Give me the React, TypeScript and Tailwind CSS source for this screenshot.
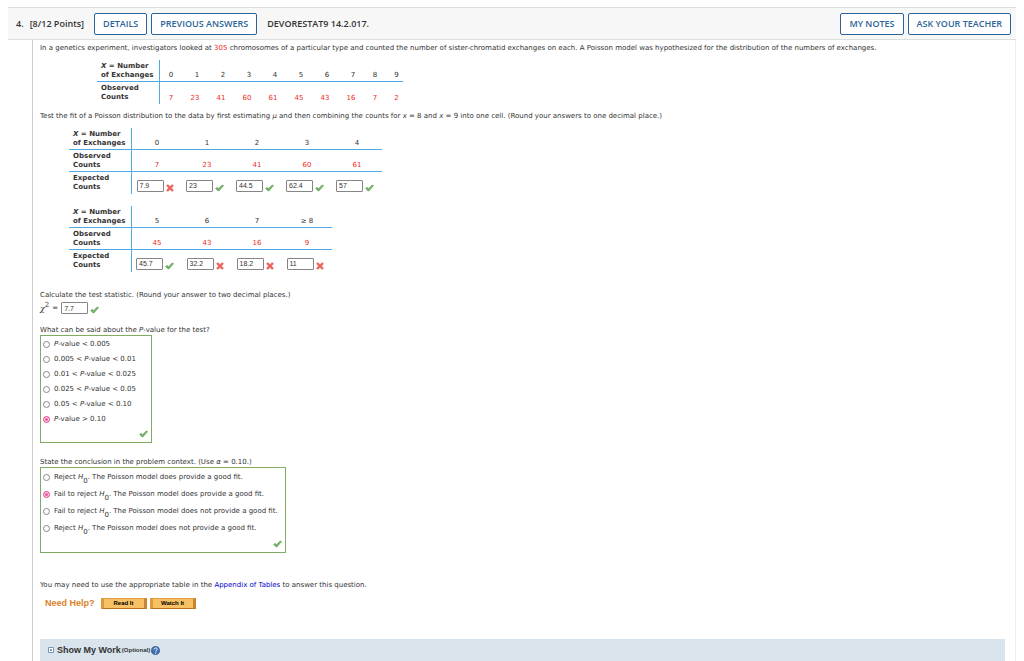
import type { ReactNode } from 'react';
import { clsx } from 'clsx';

type Mark = 'right' | 'wrong';

type Answer = {
    value: string;
    mark: Mark;
};

const observed = [7, 23, 41, 60, 61, 45, 43, 16, 7, 2];

const firstHalf = {
    exchanges: ['0', '1', '2', '3', '4'],
    counts: [7, 23, 41, 60, 61],
    expected: [
        { value: '7.9', mark: 'wrong' },
        { value: '23', mark: 'right' },
        { value: '44.5', mark: 'right' },
        { value: '62.4', mark: 'right' },
        { value: '57', mark: 'right' },
    ] as Answer[],
};

const secondHalf = {
    exchanges: ['5', '6', '7', '≥ 8'],
    counts: [45, 43, 16, 9],
    expected: [
        { value: '45.7', mark: 'right' },
        { value: '32.2', mark: 'wrong' },
        { value: '18.2', mark: 'wrong' },
        { value: '11', mark: 'wrong' },
    ] as Answer[],
};

const P = <i>P</i>;
const H0 = (
    <>
        <i>H</i>
        <sub className="-bottom-1 text-[7px]">0</sub>
    </>
);

const pValueOptions: ReactNode[] = [
    <>{P}-value &lt; 0.005</>,
    <>0.005 &lt; {P}-value &lt; 0.01</>,
    <>0.01 &lt; {P}-value &lt; 0.025</>,
    <>0.025 &lt; {P}-value &lt; 0.05</>,
    <>0.05 &lt; {P}-value &lt; 0.10</>,
    <>{P}-value &gt; 0.10</>,
];

const conclusionOptions: ReactNode[] = [
    <>Reject {H0}. The Poisson model does provide a good fit.</>,
    <>Fail to reject {H0}. The Poisson model does provide a good fit.</>,
    <>Fail to reject {H0}. The Poisson model does not provide a good fit.</>,
    <>Reject {H0}. The Poisson model does not provide a good fit.</>,
];

function CheckMark({ className }: { className?: string }) {
    return (
        <svg viewBox="0 0 18 16" role="img" aria-label="correct" className={clsx('h-2 w-[9px] shrink-0', className)}>
            <path d="M1 9 4.500 6.500 7 9 14 2l3.500 1L8 14H6z" fill="#6cab5c" stroke="#5a9a4e" strokeWidth="0.8" />
            <path d="M3.500 9 7 12 15 3.500" fill="none" stroke="#8cc67c" strokeWidth="1.2" />
        </svg>
    );
}

function CrossMark({ className }: { className?: string }) {
    return (
        <svg viewBox="0 0 16 16" role="img" aria-label="incorrect" className={clsx('size-2 shrink-0', className)}>
            <path
                d="M1 3.5 3.5 1 8 5l4.5-4L15 3.5 11 8l4 4.5-2.5 2.5L8 11l-4.5 4L1 12.5 5 8z"
                fill="#ee6560"
                stroke="#d5433f"
                strokeWidth="0.8"
            />
        </svg>
    );
}

function AnswerBox({ value, mark, label }: Answer & { label: string }) {
    return (
        <span className="inline-flex items-center">
            <input
                type="text"
                defaultValue={value}
                aria-label={label}
                className="h-3 w-[27px] rounded-[1px] border border-[#858585] bg-white pl-0.5 font-['Liberation_Sans',sans-serif] text-[7px] leading-none text-[#333]"
            />
            {mark === 'right' ? <CheckMark className="mt-1 ml-0.5" /> : <CrossMark className="mt-1 ml-0.5" />}
        </span>
    );
}

function RowHeading({ children, last }: { children: ReactNode; last?: boolean }) {
    return (
        <th
            scope="row"
            className={clsx(
                'w-[63px] border-r border-r-[#4fa9e2] pt-0.5 pl-1 text-left align-top font-bold whitespace-nowrap',
                !last && 'border-b border-b-[#4fa9e2]',
            )}
        >
            {children}
        </th>
    );
}

function ExchangesHeading() {
    return (
        <RowHeading>
            <i>X</i> = Number
            <br />
            of Exchanges
        </RowHeading>
    );
}

function ExpectedTable({ exchanges, counts, expected }: typeof firstHalf) {
    return (
        <table className="ml-[29px] border-separate border-spacing-0 leading-[9px]">
            <tbody>
                <tr className="h-[22px]">
                    <ExchangesHeading />
                    {exchanges.map((n) => (
                        <td key={n} className="w-[50px] border-b border-b-[#4fa9e2] pb-px text-center align-bottom">
                            {n}
                        </td>
                    ))}
                </tr>
                <tr className="h-[22px]">
                    <RowHeading>
                        Observed
                        <br />
                        Counts
                    </RowHeading>
                    {counts.map((n) => (
                        <td key={n} className="border-b border-b-[#4fa9e2] pb-px text-center align-bottom text-[#ee2b24]">
                            {n}
                        </td>
                    ))}
                </tr>
                <tr className="h-[22px]">
                    <RowHeading last>
                        Expected
                        <br />
                        Counts
                    </RowHeading>
                    {expected.map((answer, i) => (
                        <td key={i} className="pt-[5px] pr-1">
                            <div className="flex justify-center">
                                <AnswerBox {...answer} label={`Expected count for X ${exchanges[i]}`} />
                            </div>
                        </td>
                    ))}
                </tr>
            </tbody>
        </table>
    );
}

type ChoiceListProps = {
    name: string;
    options: ReactNode[];
    selected: number;
    className: string;
    rowClass: string;
};

function ChoiceList({ name, options, selected, className, rowClass }: ChoiceListProps) {
    return (
        <div className={clsx('w-fit border border-[#80ab60] pt-px pr-[3px] pb-1 pl-0.5', className)}>
            {options.map((option, i) => (
                <label key={i} className={clsx('flex items-center gap-1 whitespace-nowrap', rowClass)}>
                    <input
                        type="radio"
                        name={name}
                        defaultChecked={i === selected}
                        className="size-[7px] shrink-0 appearance-none rounded-full border border-[#888] bg-white checked:border-[#e8559a] checked:bg-[#e8559a] checked:shadow-[inset_0_0_0_1px_#fbe3ef]"
                    />
                    <span>{option}</span>
                </label>
            ))}
            <div className="flex h-[11px] items-end justify-end">
                <CheckMark />
            </div>
        </div>
    );
}

function HeaderButton({ children }: { children: ReactNode }) {
    return (
        <button
            type="button"
            className="h-[22px] rounded-[2px] border border-[#2d6497] bg-white px-2 font-semibold text-[#2d6497]"
        >
            {children}
        </button>
    );
}

function HelpButton({ children }: { children: ReactNode }) {
    return (
        <button
            type="button"
            className="h-[11px] w-[46px] border border-x-[3px] border-[#e09a3e] border-r-[#c98432] border-b-[#b9711f] bg-[#f8c164] text-center text-[6px] leading-[8px] font-bold text-black"
        >
            {children}
        </button>
    );
}

export default function App() {
    return (
        <div className="min-h-screen bg-white px-2 pt-[7px] font-['DejaVu_Sans',Verdana,sans-serif] text-[7px] leading-[9px] text-[#333]">
            <header className="flex h-[33px] items-center justify-between border-y border-[#ddd] bg-[#f7f7f7] pr-[5px] pl-2 font-['Open_Sans',sans-serif] text-[9px]">
                <div className="flex items-center gap-1">
                    <h1 className="mr-[6px] flex gap-[6px] font-semibold">
                        <span>4.</span>
                        <span>[8/12 Points]</span>
                    </h1>
                    <HeaderButton>DETAILS</HeaderButton>
                    <HeaderButton>PREVIOUS ANSWERS</HeaderButton>
                    <span className="ml-[6px] font-semibold">DEVORESTAT9 14.2.017.</span>
                </div>
                <div className="flex items-center gap-1">
                    <HeaderButton>MY NOTES</HeaderButton>
                    <HeaderButton>ASK YOUR TEACHER</HeaderButton>
                </div>
            </header>

            <main className="ml-6 border-r border-l border-r-[#eee] border-l-[#ccc] pt-1 pr-[10px] pl-[7px]">
                <p>
                    In a genetics experiment, investigators looked at <span className="text-[#ee2b24]">305</span> chromosomes of a
                    particular type and counted the number of sister-chromatid exchanges on each. A Poisson model was
                    hypothesized for the distribution of the numbers of exchanges.
                </p>

                <table className="mt-[7px] ml-[57px] border-separate border-spacing-0 leading-[9px]">
                    <tbody>
                        <tr className="h-[22px]">
                            <ExchangesHeading />
                            {observed.map((n, i) => (
                                <td
                                    key={i}
                                    className={clsx(
                                        'border-b border-b-[#4fa9e2] pb-px text-center align-bottom',
                                        i === 9 ? 'w-[17px] pl-1' : n < 10 ? 'w-[22px]' : 'w-[26px] pl-1',
                                    )}
                                >
                                    {i}
                                </td>
                            ))}
                        </tr>
                        <tr className="h-[22px]">
                            <RowHeading last>
                                Observed
                                <br />
                                Counts
                            </RowHeading>
                            {observed.map((n, i) => (
                                <td key={i} className={clsx('pb-px text-center align-bottom text-[#ee2b24]', i === 9 && 'pl-1')}>
                                    {n}
                                </td>
                            ))}
                        </tr>
                    </tbody>
                </table>

                <p className="mt-2">
                    Test the fit of a Poisson distribution to the data by first estimating <i>μ</i> and then combining the counts
                    for <i>x</i> = 8 and <i>x</i> = 9 into one cell. (Round your answers to one decimal place.)
                </p>

                <div className="mt-[7px] space-y-3">
                    <ExpectedTable {...firstHalf} />
                    <ExpectedTable {...secondHalf} />
                </div>

                <p className="mt-[19px]">Calculate the test statistic. (Round your answer to two decimal places.)</p>
                <div className="mt-0.5 flex h-3 items-center gap-[3px]">
                    <span className="font-['DejaVu_Serif',serif] text-[8px] italic">
                        χ<sup className="text-[7px] not-italic">2</sup>
                    </span>
                    <span>=</span>
                    <AnswerBox value="7.7" mark="right" label="Chi-squared test statistic" />
                </div>

                <fieldset className="mt-3">
                    <legend>What can be said about the {P}-value for the test?</legend>
                    <ChoiceList
                        name="p-value"
                        options={pValueOptions}
                        selected={5}
                        className="min-w-28"
                        rowClass="h-[15px]"
                    />
                </fieldset>

                <fieldset className="mt-[15px]">
                    <legend>
                        State the conclusion in the problem context. (Use <i>α</i> = 0.10.)
                    </legend>
                    <ChoiceList
                        name="conclusion"
                        options={conclusionOptions}
                        selected={1}
                        className="min-w-[246px]"
                        rowClass="h-[17px]"
                    />
                </fieldset>

                <p className="mt-7">
                    You may need to use the appropriate table in the{' '}
                    <a href="#tables" className="text-[#0000cc]">
                        Appendix of Tables
                    </a>{' '}
                    to answer this question.
                </p>

                <div className="mt-[7px] flex items-center gap-[3px] pl-[5px] font-['Liberation_Sans',sans-serif]">
                    <span className="mr-[3px] text-[9px] leading-3 font-bold text-[#d9822b]">Need Help?</span>
                    <HelpButton>Read It</HelpButton>
                    <HelpButton>Watch It</HelpButton>
                </div>

                <section className="mt-[30px] flex h-[22px] items-center bg-[#dae4ec] pl-2 font-['Liberation_Sans',sans-serif]">
                    <button type="button" className="flex items-center font-bold">
                        <svg viewBox="0 0 6 6" className="mr-[3px] size-[6px]" aria-hidden="true">
                            <path d="M.5.5h5v5h-5z" fill="#fff" stroke="#6f9abf" />
                            <path d="M2 3h2" stroke="#335" />
                        </svg>
                        <span className="mr-px text-[9px]">Show My Work</span>
                        <span className="text-[6px]">(Optional)</span>
                    </button>
                    <svg viewBox="0 0 18 18" className="ml-px size-[9px]" role="img" aria-label="Help">
                        <circle cx="9" cy="9" r="8.5" fill="#3e6cae" stroke="#24508f" />
                        <path
                            d="M6 7c0-4 6.500-4 6.500-.5C12.500 9 9.500 8.500 9.500 11.500M9.500 13v2.500"
                            fill="none"
                            stroke="#fff"
                            strokeWidth="2"
                        />
                    </svg>
                </section>
            </main>
        </div>
    );
}
